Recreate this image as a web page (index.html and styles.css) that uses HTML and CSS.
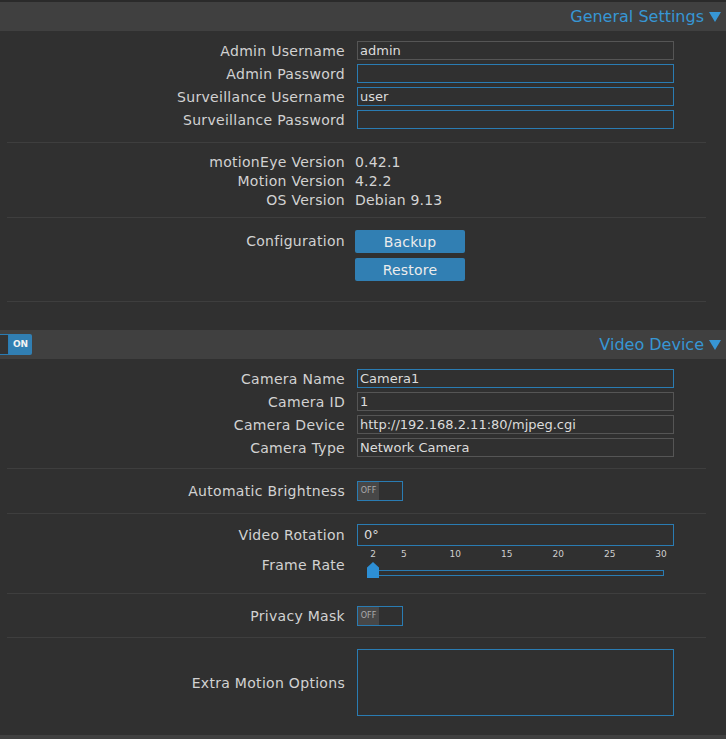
FILE: index.html
```html
<!DOCTYPE html>
<html>
<head>
<meta charset="utf-8">
<link rel="stylesheet" href="styles.css">
</head>
<body>
<div class="topstrip"></div>

<div class="sec-header">
  <span class="sec-title">General Settings</span><span class="caret"></span>
</div>
<div class="sec-body">
  <div class="group g-inputs">
    <div class="row"><label class="lbl">Admin Username</label><div class="inp">admin</div></div>
    <div class="row"><label class="lbl">Admin Password</label><div class="inp focus"></div></div>
    <div class="row"><label class="lbl">Surveillance Username</label><div class="inp focus">user</div></div>
    <div class="row"><label class="lbl">Surveillance Password</label><div class="inp focus"></div></div>
  </div>
  <div class="sep"></div>
  <div class="group g-text">
    <div class="trow"><span class="lbl">motionEye Version</span><span class="val">0.42.1</span></div>
    <div class="trow"><span class="lbl">Motion Version</span><span class="val">4.2.2</span></div>
    <div class="trow"><span class="lbl">OS Version</span><span class="val">Debian 9.13</span></div>
  </div>
  <div class="sep"></div>
  <div class="group g-config">
    <div class="brow"><span class="lbl">Configuration</span>
      <div class="btns"><button class="btn">Backup</button><button class="btn">Restore</button></div>
    </div>
  </div>
  <div class="sep"></div>
  <div class="sec-gap"></div>
</div>

<div class="sec-header">
  <div class="on-toggle"><span class="on-knob"></span><span class="on-lbl">ON</span></div>
  <span class="sec-title">Video Device</span><span class="caret"></span>
</div>
<div class="sec-body">
  <div class="group g-inputs2">
    <div class="row"><label class="lbl">Camera Name</label><div class="inp focus">Camera1</div></div>
    <div class="row"><label class="lbl">Camera ID</label><div class="inp">1</div></div>
    <div class="row"><label class="lbl">Camera Device</label><div class="inp">http://192.168.2.11:80/mjpeg.cgi</div></div>
    <div class="row"><label class="lbl">Camera Type</label><div class="inp">Network Camera</div></div>
  </div>
  <div class="sep"></div>
  <div class="group g-toggle first">
    <div class="row"><label class="lbl">Automatic Brightness</label><div class="toggle"><span class="off-knob">OFF</span></div></div>
  </div>
  <div class="sep"></div>
  <div class="group g-video">
    <div class="row rot"><label class="lbl">Video Rotation</label><div class="inp sel focus">0°</div></div>
    <div class="row fr"><label class="lbl">Frame Rate</label>
      <div class="slider">
        <div class="ticks">
          <span class="tick" style="left:3px">2</span>
          <span class="tick" style="left:33.9px">5</span>
          <span class="tick" style="left:85.3px">10</span>
          <span class="tick" style="left:136.8px">15</span>
          <span class="tick" style="left:188.2px">20</span>
          <span class="tick" style="left:239.7px">25</span>
          <span class="tick" style="left:291px">30</span>
        </div>
        <div class="track"></div>
        <div class="thumb"></div>
      </div>
    </div>
  </div>
  <div class="sep"></div>
  <div class="group g-toggle">
    <div class="row"><label class="lbl">Privacy Mask</label><div class="toggle"><span class="off-knob">OFF</span></div></div>
  </div>
  <div class="sep"></div>
  <div class="group g-extra">
    <div class="row ta-row"><label class="lbl">Extra Motion Options</label><div class="textarea"></div></div>
  </div>
</div>
<div class="sec-header next"></div>
</body>
</html>
```
FILE: styles.css
```css
html, body {
  margin: 0;
  padding: 0;
  background: #303030;
  overflow: hidden;
}
body {
  font-family: "DejaVu Sans", sans-serif;
  color: #d4d4d4;
  font-size: 14px;
  width: 726px;
  height: 739px;
}
.topstrip {
  height: 2px;
  background: #2a2a2a;
}
.sec-header {
  height: 29px;
  background: #404040;
  display: flex;
  align-items: center;
  justify-content: flex-end;
  padding-right: 5px;
  position: relative;
}
.sec-header.next {
  height: 4px;
}
.sec-title {
  color: #3796d4;
  font-size: 16px;
  margin-right: 5px;
}
.caret {
  width: 0;
  height: 0;
  border-left: 6px solid transparent;
  border-right: 6px solid transparent;
  border-top: 10px solid #3796d4;
  margin-top: 1px;
}
.sec-body {
  display: flex;
  flex-direction: column;
}
.sep {
  height: 1px;
  background: #3e3e3e;
  margin: 0 20px 0 7px;
}
.group {
  display: flex;
  flex-direction: column;
}
.g-inputs { padding: 8px 0 11px; }
.g-inputs2 { padding: 8px 0 9px; }
.g-text { padding: 9px 0 8px; }
.g-config { padding: 12px 0 20px; }
.g-toggle { padding: 10px 0 10px; }
.g-toggle.first { padding: 10px 0 11px; }
.g-video { padding: 9px 0 8px; }
.g-extra { padding: 11px 0 19px; }
.sec-gap { height: 28px; }

.row {
  display: grid;
  grid-template-columns: 345px 317px;
  column-gap: 12px;
  align-items: center;
  height: 23px;
}
.trow {
  display: grid;
  grid-template-columns: 345px auto;
  column-gap: 10px;
  align-items: center;
  height: 19px;
}
.lbl {
  text-align: right;
  white-space: nowrap;
  color: #d2d2d2;
  letter-spacing: 0.3px;
}
.val {
  color: #d4d4d4;
  letter-spacing: 0.2px;
}
.inp {
  box-sizing: border-box;
  height: 19px;
  border: 1px solid #555555;
  background: #303030;
  color: #dcdcdc;
  font-size: 13px;
  line-height: 17px;
  padding-left: 2px;
  white-space: nowrap;
}
.inp.focus {
  border-color: #2a7cb3;
}
.inp.sel {
  height: 22px;
  line-height: 20px;
  padding-left: 6px;
}
.row.rot { height: 24px; }

.brow {
  display: grid;
  grid-template-columns: 345px auto;
  column-gap: 10px;
  align-items: start;
}
.brow .lbl {
  line-height: 23px;
}
.btns {
  display: flex;
  flex-direction: column;
  gap: 5px;
}
.btn {
  width: 110px;
  height: 23px;
  border: none;
  border-radius: 2px;
  background: #317fb3;
  color: #ececec;
  font-family: "DejaVu Sans", sans-serif;
  font-size: 14px;
  letter-spacing: 0.2px;
  padding: 0;
}

.toggle {
  box-sizing: border-box;
  width: 46px;
  height: 20px;
  border: 1px solid #2a7cb3;
  display: flex;
}
.off-knob {
  width: 21px;
  background: #474747;
  color: #ababab;
  font-size: 8px;
  line-height: 18px;
  text-align: center;
}

.on-toggle {
  position: absolute;
  left: 0;
  top: 4px;
  height: 21px;
  width: 32px;
  display: flex;
}
.on-knob {
  box-sizing: border-box;
  width: 9px;
  height: 21px;
  border: 1px solid #2a7cb3;
  border-left: none;
  background: #333333;
}
.on-lbl {
  flex: 1;
  background: #317fb3;
  color: #f2f2f2;
  font-size: 9px;
  font-weight: bold;
  line-height: 21px;
  text-align: center;
  border-radius: 0 2px 2px 0;
}

.row.fr {
  height: 38px;
  align-items: start;
}
.row.fr .lbl {
  padding-top: 10px;
}
.slider {
  position: relative;
  height: 34px;
  width: 317px;
}
.ticks {
  position: absolute;
  left: 13px;
  top: 2px;
  height: 12px;
  width: 300px;
}
.tick {
  position: absolute;
  top: 0;
  transform: translateX(-50%);
  font-size: 9px;
  color: #cfcfcf;
}
.track {
  position: absolute;
  left: 13px;
  top: 23px;
  width: 294px;
  height: 6px;
  box-sizing: border-box;
  border: 1px solid #2a7cb3;
  background: #303030;
}
.thumb {
  position: absolute;
  left: 10px;
  top: 15px;
  width: 12px;
  height: 16px;
  background: #2d8fd5;
  clip-path: polygon(50% 0, 100% 35%, 100% 100%, 0 100%, 0 35%);
}

.ta-row {
  height: 67px;
  align-items: center;
}
.textarea {
  box-sizing: border-box;
  height: 67px;
  border: 1px solid #2a7cb3;
}
```
